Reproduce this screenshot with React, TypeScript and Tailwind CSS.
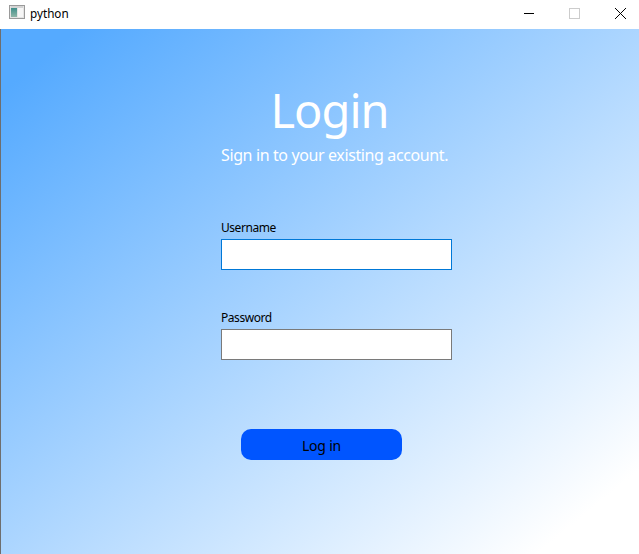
import React from 'react';

const Field = ({ label, focused }: { label: string; focused?: boolean }) => (
    <div className="flex flex-col">
        <label className="text-[12px] tracking-[-0.45px] leading-[15px] text-black mb-[4px]">{label}</label>
        <input
            type="text"
            className={`w-[231px] h-[31px] bg-white border outline-none ${focused ? 'border-[#0078d7]' : 'border-[#7a7a7a]'}`}
        />
    </div>
);

const App = () => {
    return (
        <div className="w-[639px] h-[554px] flex flex-col overflow-hidden font-['Noto_Sans','Open_Sans',sans-serif]">
            {/* title bar */}
            <div className="h-[29px] bg-white flex items-center shrink-0">
                <svg width="16" height="14" viewBox="0 0 16 14" className="ml-[9px] mb-[5px]">
                    <defs>
                        <linearGradient id="pane" x1="0" y1="0" x2="0" y2="1">
                            <stop offset="0" stopColor="#3f8f8a" />
                            <stop offset="1" stopColor="#8fb5a8" />
                        </linearGradient>
                    </defs>
                    <rect x="0.5" y="0.5" width="15" height="13" fill="#e4e4e4" stroke="#9a9a9a" />
                    <rect x="2" y="3" width="6" height="9" fill="url(#pane)" />
                    <rect x="9" y="3" width="5" height="9" fill="#f6f6f6" />
                    <rect x="2" y="1.5" width="12" height="1" fill="#c4c4c4" />
                </svg>
                <span className="ml-[5px] mb-[1px] text-[11.7px] text-black">python</span>
                <div className="ml-auto mr-[-5px] flex items-center">
                    <svg width="46" height="29" viewBox="0 0 46 29">
                        <path d="M18 13.5h10" stroke="#000" strokeWidth="1" />
                    </svg>
                    <svg width="46" height="29" viewBox="0 0 46 29">
                        <rect x="17.5" y="8.5" width="10" height="10" fill="none" stroke="#cccccc" />
                    </svg>
                    <svg width="46" height="29" viewBox="0 0 46 29">
                        <path d="M17 8l11 11M28 8l-11 11" stroke="#000" strokeWidth="1" fill="none" />
                    </svg>
                </div>
            </div>
            {/* window body */}
            <div className="flex-1 border-l border-[#6e6e6e] bg-[linear-gradient(to_bottom_right,#55aaff_6%,#ffffff_92%)] pl-[220px] flex flex-col">
                <div className="w-[231px] flex flex-col">
                    <h1 className="mt-[49px] text-[47px] tracking-[-1px] leading-[64px] font-normal text-white text-center ml-[-7px] w-[231px]">Login</h1>
                    <p className="mt-[2px] text-[16px] tracking-[-0.38px] leading-[22px] text-white whitespace-nowrap">Sign in to your existing account.</p>
                    <div className="mt-[54px] flex flex-col gap-[40px]">
                        <Field label="Username" focused />
                        <Field label="Password" />
                    </div>
                    <button className="mt-[69px] ml-[20px] w-[161px] h-[31px] pt-[2px] rounded-[10px] bg-[#0055ff] text-black text-[14px] tracking-[-0.2px]">Log in</button>
                </div>
            </div>
        </div>
    );
};

export default App;
